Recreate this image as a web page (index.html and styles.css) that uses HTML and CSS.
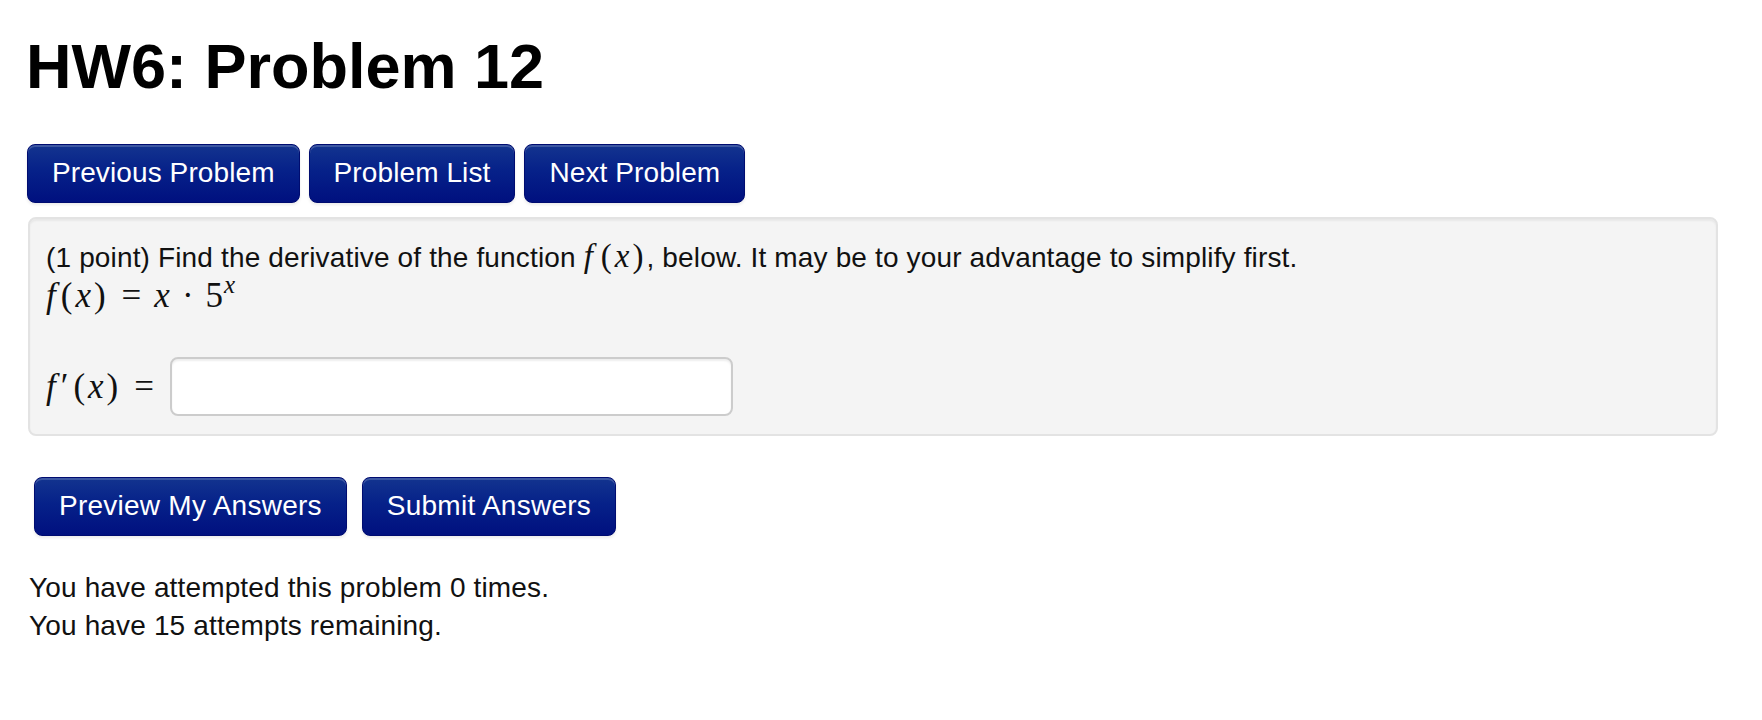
FILE: index.html
```html
<!DOCTYPE html>
<html lang="en">

<head>
  <meta charset="UTF-8">
  <meta name="viewport" content="width=device-width, initial-scale=1.0">
  <title>HW6: Problem 12</title>
  <link rel="stylesheet" href="styles.css">
</head>

<body>
  <h1>HW6: Problem 12</h1>

  <div class="nav-buttons">
    <a href="#" class="btn">Previous Problem</a>
    <a href="#" class="btn">Problem List</a>
    <a href="#" class="btn">Next Problem</a>
  </div>

  <div class="problem">
    <p>(1 point) Find the derivative of the function <span class="math"><i class="f">f</i><span class="paren">(</span><i>x</i><span class="paren">)</span></span>, below. It may be to your advantage to simplify first.</p>
    <p class="math display"><i class="f">f</i><span class="paren">(</span><i>x</i><span class="paren">)</span><span class="op">=</span><i>x</i><span class="op dot">·</span>5<sup><i>x</i></sup></p>

    <div class="answer">
      <label for="answer" class="math display"><i class="f">f</i><span class="prime">′</span><span class="paren">(</span><i>x</i><span class="paren">)</span><span class="op eq">=</span></label>
      <input type="text" id="answer">
    </div>
  </div>

  <div class="submit-buttons">
    <button class="btn">Preview My Answers</button>
    <button class="btn">Submit Answers</button>
  </div>

  <div class="attempts">
    <p>You have attempted this problem 0 times.</p>
    <p>You have 15 attempts remaining.</p>
  </div>
</body>

</html>
```

FILE: styles.css
```css
* {
  box-sizing: border-box;
  margin: 0;
  padding: 0;
}

body {
  font-family: 'Liberation Sans', Arial, Helvetica, sans-serif;
  font-size: 28px;
  line-height: 38px;
  letter-spacing: 0.15px;
  color: #111;
  background-color: #fff;
  padding: 28px 44px 0 27px;
}

h1 {
  font-size: 63px;
  line-height: 76px;
  font-weight: bold;
  letter-spacing: 0;
  color: #000;
  margin-left: -1px;
}

.btn {
  display: inline-block;
  font-family: 'Liberation Sans', Arial, Helvetica, sans-serif;
  font-size: 28px;
  line-height: 40px;
  letter-spacing: 0.1px;
  padding: 8px 24px 9px;
  color: #fff;
  text-decoration: none;
  background: linear-gradient(to bottom, #13348f 0%, #062189 45%, #00107f 100%);
  border: 1px solid #000c70;
  border-radius: 8px;
  box-shadow: inset 0 2px 0 rgba(255, 255, 255, 0.18), 0 2px 3px rgba(0, 0, 0, 0.08);
  cursor: pointer;
}

.btn:hover {
  background: #00107f;
}

.nav-buttons {
  display: flex;
  gap: 9px;
  margin-top: 40px;
}

.problem {
  margin: 14px 0 0 1px;
  padding: 20px 16px 18px;
  background-color: #f4f4f4;
  border: 2px solid #e3e3e3;
  border-radius: 8px;
  box-shadow: inset 0 2px 2px rgba(0, 0, 0, 0.05);
}

.math {
  font-family: 'Liberation Serif', 'Times New Roman', serif;
  font-size: 33px;
  line-height: 30px;
  letter-spacing: 0;
  color: #111;
}

.math i {
  font-style: italic;
}

.math .f {
  margin-right: 5px;
}

.math .paren {
  margin: 0 3px;
}

.math .prime {
  margin-right: 2px;
}

.math.display {
  display: block;
  font-size: 35px;
  line-height: 38px;
}

.math.display .f {
  margin-right: 2px;
}

.math.display .op {
  margin: 0 13px;
}

.math.display .dot {
  margin: 0 12px;
}

.math.display .eq {
  margin-right: 0;
}

.math sup {
  font-size: 25px;
  line-height: 0;
  vertical-align: 14px;
  margin-left: 1px;
}

.answer {
  display: flex;
  align-items: center;
  margin-top: 42px;
}

.answer .math.display .f {
  margin-right: 5px;
}

.answer input {
  width: 563px;
  height: 59px;
  margin-left: 16px;
  border: 2px solid #cccccc;
  border-radius: 8px;
  background-color: #fff;
  box-shadow: inset 0 2px 2px rgba(0, 0, 0, 0.07);
  font-size: 28px;
  padding: 0 12px;
}

.submit-buttons {
  display: flex;
  gap: 15px;
  margin: 41px 0 0 7px;
}

.submit-buttons .btn {
  letter-spacing: 0.25px;
}

.attempts {
  margin: 33px 0 0 2px;
}
```
